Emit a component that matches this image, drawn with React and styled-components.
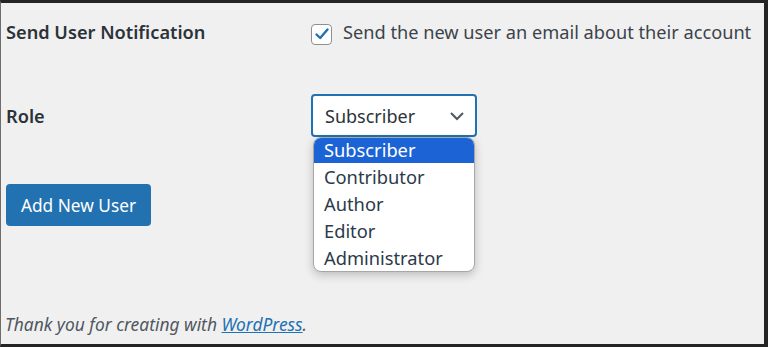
import React from 'react';
import styled, { createGlobalStyle } from 'styled-components';

const GlobalStyle = createGlobalStyle`
	html, body {
		margin: 0;
		padding: 0;
		background: #1e1e1e;
	}
	* {
		box-sizing: border-box;
	}
`;

const Frame = styled.div`
	width: 768px;
	height: 347px;
	border-top: 3px solid #242424;
	border-right: 4px solid #242424;
	border-bottom: 3px solid #242424;
	border-left: 1px solid #6d6d6d;
	background: #f0f0f1;
	font-family: "Noto Sans", "Open Sans", sans-serif;
	color: #2c3338;
	display: flex;
	flex-direction: column;
	padding: 15px 0 0 5px;
	overflow: hidden;
`;

const FormRow = styled.div`
	display: flex;
	align-items: center;
	height: ${props => props.height}px;
	margin-top: ${props => props.offset || 0}px;
`;

const Label = styled.div`
	width: 305px;
	flex: none;
	font-size: 18.2px;
	font-weight: 600;
	color: #2c3338;
`;

const CheckLabel = styled.label`
	display: flex;
	align-items: center;
	gap: 11px;
	font-size: 18.2px;
	color: #3c434a;
`;

const Box = styled.span`
	width: 21px;
	height: 21px;
	margin-top: 4px;
	border: 1px solid #8c8f94;
	border-radius: 4px;
	background: #fff;
	display: flex;
	align-items: center;
	justify-content: center;
`;

const SelectWrap = styled.div`
	position: relative;
	width: 166px;
	height: 43px;
`;

const SelectBox = styled.div`
	height: 100%;
	border: 2px solid #2271b1;
	border-radius: 4px;
	background: #fff;
	display: flex;
	align-items: center;
	justify-content: space-between;
	padding: 0 10px 0 12px;
	font-size: 18px;
	color: #2c3338;
`;

const Menu = styled.ul`
	position: absolute;
	top: 43px;
	left: 2px;
	width: 162px;
	margin: 0;
	padding: 0;
	list-style: none;
	background: #fff;
	border: 1px solid #a7a7a7;
	border-radius: 8px;
	box-shadow: 0 3px 10px rgba(0, 0, 0, 0.22);
	overflow: hidden;
`;

const Option = styled.li`
	height: ${props => (props.selected ? 25 : 27)}px;
	line-height: ${props => (props.selected ? 24 : 27)}px;
	padding-left: 10px;
	font-size: 18.3px;
	background: ${props => (props.selected ? '#1c63d5' : 'transparent')};
	color: ${props => (props.selected ? '#fff' : '#2c3a4a')};
`;

const Button = styled.button`
	margin-top: 47px;
	width: 145px;
	height: 42px;
	border: none;
	border-radius: 4px;
	background: #2271b1;
	color: #fff;
	font-family: inherit;
	font-size: 17.3px;
	padding: 0;
	cursor: pointer;
`;

const Footer = styled.p`
	margin: auto 0 8px -1px;
	font-size: 17.4px;
	font-style: italic;
	color: #50575e;
	a {
		color: #2271b1;
		text-decoration: underline;
	}
`;

const roles = ['Subscriber', 'Contributor', 'Author', 'Editor', 'Administrator'];

const App = () => (
	<>
		<GlobalStyle />
		<Frame>
			<FormRow height={28}>
				<Label>Send User Notification</Label>
				<CheckLabel>
					<Box>
						<svg width="16" height="16" viewBox="0 0 16 16">
							<path d="M2.5 8.5 L6.2 12 L13.5 3.5" fill="none" stroke="#2271b1" strokeWidth="2.4" strokeLinecap="round" strokeLinejoin="round" />
						</svg>
					</Box>
					Send the new user an email about their account
				</CheckLabel>
			</FormRow>
			<FormRow height={43} offset={48}>
				<Label>Role</Label>
				<SelectWrap>
					<SelectBox>
						Subscriber
						<svg width="16" height="10" viewBox="0 0 16 10">
							<path d="M2 2 L8 8 L14 2" fill="none" stroke="#50575e" strokeWidth="2" />
						</svg>
					</SelectBox>
					<Menu>
						{roles.map((r, i) => (
							<Option key={r} selected={i === 0}>{r}</Option>
						))}
					</Menu>
				</SelectWrap>
			</FormRow>
			<Button>Add New User</Button>
			<Footer>
				Thank you for creating with <a href="#">WordPress</a>.
			</Footer>
		</Frame>
	</>
);

export default App;
